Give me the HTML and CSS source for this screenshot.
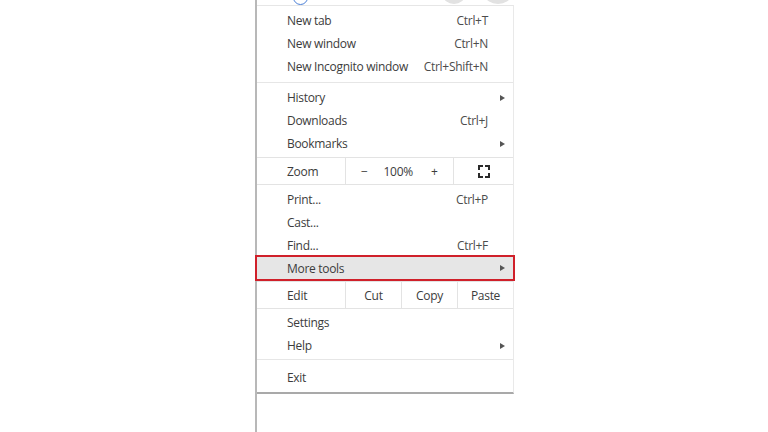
FILE: index.html
```html
<!DOCTYPE html>
<html>
<head>
<meta charset="utf-8">
<link rel="stylesheet" href="styles.css">
</head>
<body>
<div class="frame">
  <div class="topstrip">
    <span class="avatar"></span>
    <span class="btn btn-a"></span>
    <span class="btn btn-b"></span>
  </div>
  <div class="menu">
    <div class="section s-a">
      <div class="item"><span class="label">New tab</span><span class="key">Ctrl+T</span></div>
      <div class="item"><span class="label">New window</span><span class="key">Ctrl+N</span></div>
      <div class="item"><span class="label">New Incognito window</span><span class="key">Ctrl+Shift+N</span></div>
    </div>
    <div class="section s-b">
      <div class="item sub"><span class="label">History</span><span class="arrow"></span></div>
      <div class="item"><span class="label">Downloads</span><span class="key">Ctrl+J</span></div>
      <div class="item sub"><span class="label">Bookmarks</span><span class="arrow"></span></div>
    </div>
    <div class="row zoom-row">
      <div class="cell first">Zoom</div>
      <div class="cell zoom-ctl"><span class="minus">−</span><span class="pct">100%</span><span class="plus">+</span></div>
      <div class="cell full">
        <svg width="12" height="13" viewBox="0 0 12 13"><path d="M1 5V1h4M7 1h4v4M11 8v4H7M5 12H1V8" fill="none" stroke="#2a2a2a" stroke-width="2"/></svg>
      </div>
    </div>
    <div class="section s-c">
      <div class="item"><span class="label">Print...</span><span class="key">Ctrl+P</span></div>
      <div class="item"><span class="label">Cast...</span></div>
      <div class="item"><span class="label">Find...</span><span class="key">Ctrl+F</span></div>
      <div class="item sub active"><span class="label">More tools</span><span class="arrow"></span></div>
    </div>
    <div class="row edit-row">
      <div class="cell first">Edit</div>
      <div class="cell btn-cell">Cut</div>
      <div class="cell btn-cell">Copy</div>
      <div class="cell btn-cell">Paste</div>
    </div>
    <div class="section s-d">
      <div class="item"><span class="label">Settings</span></div>
      <div class="item sub"><span class="label">Help</span><span class="arrow"></span></div>
    </div>
    <div class="section s-e">
      <div class="item"><span class="label">Exit</span></div>
    </div>
  </div>
</div>
</body>
</html>
```
FILE: styles.css
```css
html, body {
  margin: 0;
  padding: 0;
  background: #ffffff;
}
body {
  width: 768px;
  height: 432px;
  overflow: hidden;
  font-family: "Open Sans", "Noto Sans", sans-serif;
  font-size: 12px;
  letter-spacing: -0.3px;
  color: #3c3c3c;
}
.frame {
  margin-left: 255px;
  width: 258px;
  height: 432px;
  border-left: 2px solid #b8b8b8;
}
.topstrip {
  height: 5px;
  overflow: hidden;
  position: relative;
}
.avatar {
  position: absolute;
  left: 36px;
  top: -10px;
  width: 13px;
  height: 13px;
  border: 1.5px solid #4a7fd6;
  border-radius: 50%;
}
.btn {
  position: absolute;
  top: -14px;
  width: 22px;
  height: 18px;
  border-radius: 50%;
  background: #e2e2e2;
}
.btn-a { left: 186px; }
.btn-b { left: 228px; width: 26px; }
.menu {
  width: 256px;
  border-top: 1px solid #e6e6e6;
  border-right: 1px solid #e9e9e9;
  border-bottom: 2px solid #a9a9a9;
}
.section {
  border-bottom: 1px solid #e6e6e6;
}
.s-a { padding: 3px 0 4px; }
.s-b { padding: 3px 0 2px; border-bottom: none; }
.s-c { padding: 3px 0 2px; border-bottom: none; }
.s-d { padding: 2px 0 2px; }
.s-e { padding: 6px 0 3px; border-bottom: none; }
.item {
  height: 23px;
  display: flex;
  align-items: center;
  padding: 0 25px 0 30px;
}
.item.sub {
  padding-right: 8px;
}
.label {
  flex: 1;
}
.key {
  color: #4c4c4c;
}
.arrow {
  width: 0;
  height: 0;
  border-left: 5px solid #555;
  border-top: 3.5px solid transparent;
  border-bottom: 3.5px solid transparent;
}
.item.active {
  background: #e6e6e6;
  outline: 2px solid #d0202a;
  outline-offset: 0;
  height: 22px;
}
.row {
  display: flex;
  height: 26px;
  border-top: 1px solid #e3e3e3;
  border-bottom: 1px solid #e3e3e3;
}
.cell {
  display: flex;
  align-items: center;
  border-left: 1px solid #e3e3e3;
}
.cell.first {
  width: 58px;
  padding-left: 30px;
  border-left: none;
}
.zoom-ctl {
  width: 107px;
}
.minus { margin-left: 15px; }
.pct { margin-left: 16px; }
.plus { margin-left: 18px; }
.full {
  flex: 1;
  justify-content: center;
}
.btn-cell {
  width: 55px;
  justify-content: center;
}
.edit-row .btn-cell:last-child {
  flex: 1;
}
```
